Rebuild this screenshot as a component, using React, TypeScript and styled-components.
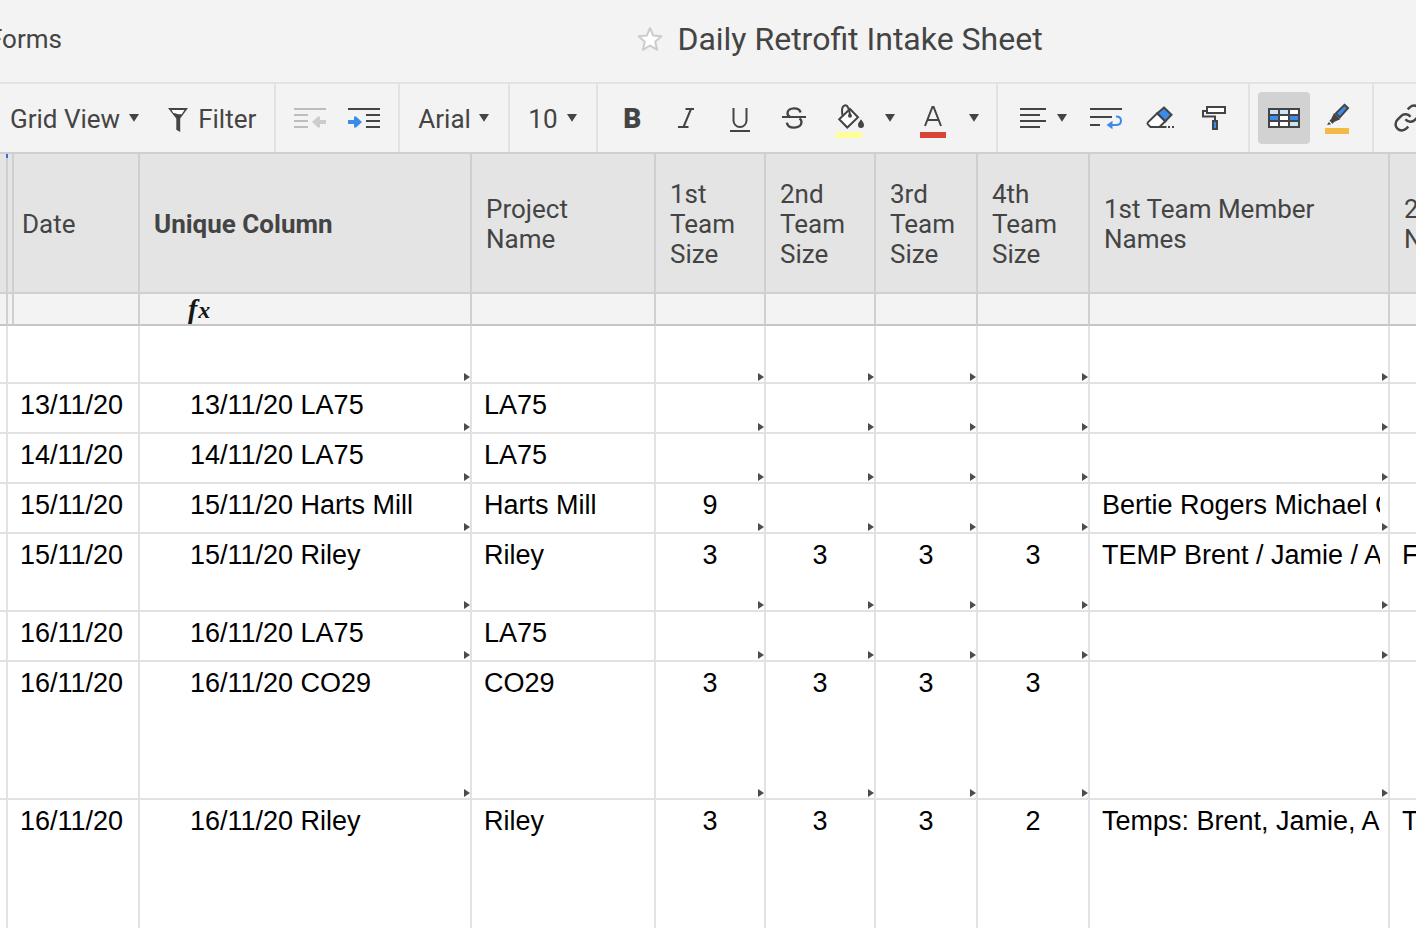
import React from "react";
import styled, { createGlobalStyle } from "styled-components";

const INK = "#444444";
const BLUE = "#3a8bea";
const PALE = "#c9e4f5";

const GlobalStyle = createGlobalStyle`
  *, *::before, *::after { box-sizing: border-box; }
  body {
    margin: 0;
    background: #ffffff;
    color: ${INK};
    font-family: Roboto, "Liberation Sans", sans-serif;
    font-size: 26px;
    line-height: 30px;
  }
  button, select { font: inherit; color: inherit; }
  svg { display: block; flex: none; }
`;

const Page = styled.div`
  display: flex;
  flex-direction: column;
  height: 100vh;
  overflow: hidden;
`;

const TopBar = styled.header`
  display: flex;
  align-items: center;
  height: 84px;
  flex: none;
  padding-bottom: 4px;
  background: #f3f3f3;
  border-bottom: 2px solid #e2e2e2;
`;

const MenuBar = styled.nav`
  width: 264px;
  flex: none;
`;

const MenuLink = styled.a`
  margin-left: -12px;
  color: inherit;
  text-decoration: none;
`;

const TitleArea = styled.div`
  display: flex;
  flex: 1;
  align-items: center;
  justify-content: center;
  gap: 14px;
`;

const StarButton = styled.button`
  padding: 0;
  border: 0;
  background: none;
`;

const Title = styled.h1`
  margin: 0;
  font-size: 32px;
  font-weight: 400;
  line-height: 38px;
  white-space: nowrap;
`;

const Toolbar = styled.div`
  display: flex;
  flex: none;
  height: 70px;
  background: #f3f3f3;
  border-bottom: 2px solid #cfcfcf;
`;

const Group = styled.div<{ $first?: boolean }>`
  display: flex;
  flex: none;
  align-items: center;
  gap: 2px;
  padding: 0 8px 0 ${(p) => (p.$first ? 0 : 8)}px;
  border-right: 2px solid #e2e2e2;
`;

const ToolButton = styled.button<{ $active?: boolean; $strong?: boolean }>`
  display: flex;
  align-items: center;
  justify-content: center;
  width: 52px;
  height: 52px;
  padding: 0;
  border: 0;
  border-radius: 4px;
  background: ${(p) => (p.$active ? "#d2d2d2" : "transparent")};
  ${(p) => p.$strong && "font-size: 28px; font-weight: 900;"}
`;

const WideButton = styled.button<{ $pad: string; $gap: number }>`
  display: flex;
  align-items: center;
  height: 52px;
  gap: ${(p) => p.$gap}px;
  padding: ${(p) => p.$pad};
  border: 0;
  border-radius: 4px;
  background: transparent;
  white-space: nowrap;
`;

const ButtonText = styled.span`
  padding-top: 2px;
`;

const Picker = styled.label<{ $width: number }>`
  display: grid;
  align-items: center;
  width: ${(p) => p.$width}px;
  height: 52px;

  > * { grid-area: 1 / 1; }
  > svg { justify-self: end; margin-right: 10px; pointer-events: none; }
`;

const PickerSelect = styled.select`
  appearance: none;
  width: 100%;
  height: 100%;
  padding: 2px 22px 0 10px;
  border: 0;
  background: transparent;
`;

const SheetArea = styled.main`
  flex: 1;
  min-height: 0;
  overflow: hidden;
`;

const Sheet = styled.table`
  table-layout: fixed;
  width: 1690px;
  border-collapse: separate;
  border-spacing: 0;
`;

const HeadCell = styled.th<{ $strong?: boolean; $pad?: number }>`
  height: 140px;
  padding: 2px 14px 0 ${(p) => p.$pad ?? 14}px;
  background: #e4e4e4;
  border-right: 2px solid #cfcfcf;
  border-bottom: 2px solid #cfcfcf;
  font-weight: ${(p) => (p.$strong ? 700 : 400)};
  text-align: left;
  vertical-align: middle;
`;

const StripCell = styled.td<{ $formula?: boolean; $marker?: boolean }>`
  height: ${(p) => (p.$marker ? 140 : 32)}px;
  padding: 0 0 0 ${(p) => (p.$formula ? 48 : 0)}px;
  background: ${(p) => (p.$marker ? "#e4e4e4" : "#f3f3f3")};
  border-right: 2px solid #cfcfcf;
  border-bottom: 2px solid ${(p) => (p.$marker ? "#cfcfcf" : "#c6c6c6")};
`;

const FreezeMark = styled.div`
  position: relative;
  height: 138px;

  &::after {
    content: "";
    position: absolute;
    top: 0;
    right: -2px;
    width: 2px;
    height: 4px;
    background: #2f6fe0;
  }
`;

const Formula = styled.div`
  height: 30px;
  color: #161616;
  font: italic 700 28px/30px "Liberation Serif", serif;

  small { margin-left: 1px; font-size: 24px; }
`;

const Cell = styled.td<{ $height: number; $indent?: boolean; $center?: boolean }>`
  position: relative;
  height: ${(p) => p.$height}px;
  padding: 6px ${(p) => (p.$center ? 0 : 8)}px 0 ${(p) =>
    p.$center ? 0 : p.$indent ? 50 : 12}px;
  border-right: 2px solid #e2e2e2;
  border-bottom: 2px solid #e2e2e2;
  color: #000000;
  font-family: "Liberation Sans", Arial, sans-serif;
  font-size: 27px;
  text-align: ${(p) => (p.$center ? "center" : "left")};
  vertical-align: top;
`;

const CellText = styled.div`
  overflow: hidden;
  white-space: nowrap;
`;

const CellArrow = styled.span`
  position: absolute;
  right: 0;
  bottom: 1px;
  border: solid transparent;
  border-width: 4px 0 4px 6px;
  border-left-color: #4c4c4c;
`;

const Caret = () => (
  <svg width="12" height="12" viewBox="0 0 12 12" aria-hidden="true">
    <path d="M1 2h10L6 9.800z" fill={INK} />
  </svg>
);

const Icon = ({
  w = 32,
  h = 32,
  children,
}: {
  w?: number;
  h?: number;
  children: React.ReactNode;
}) => (
  <svg
    width={w}
    height={h}
    viewBox={`0 0 ${w} ${h}`}
    fill="none"
    stroke={INK}
    strokeWidth="2"
    aria-hidden="true"
  >
    {children}
  </svg>
);

const gridColours = [
  [PALE, PALE, "#fff"],
  [BLUE, "#fff", BLUE],
  ["#fff", "#fff", PALE],
];

const columns = [126, 332, 184, 110, 110, 102, 112, 300, 300];

const headings = [
  "Project Name",
  "1st Team Size",
  "2nd Team Size",
  "3rd Team Size",
  "4th Team Size",
  "1st Team Member Names",
  "2nd Team Member Names",
];

type Row = { height: number; cells: string[] };

const rows: Row[] = [
  { height: 58, cells: ["", "", "", "", "", "", "", "", ""] },
  { height: 50, cells: ["13/11/20", "13/11/20 LA75", "LA75", "", "", "", "", "", ""] },
  { height: 50, cells: ["14/11/20", "14/11/20 LA75", "LA75", "", "", "", "", "", ""] },
  {
    height: 50,
    cells: ["15/11/20", "15/11/20 Harts Mill", "Harts Mill", "9", "", "", "", "Bertie Rogers Michael C", ""],
  },
  {
    height: 78,
    cells: ["15/11/20", "15/11/20 Riley", "Riley", "3", "3", "3", "3", "TEMP Brent / Jamie / A", "F"],
  },
  { height: 50, cells: ["16/11/20", "16/11/20 LA75", "LA75", "", "", "", "", "", ""] },
  { height: 138, cells: ["16/11/20", "16/11/20 CO29", "CO29", "3", "3", "3", "3", "", ""] },
  {
    height: 168,
    cells: ["16/11/20", "16/11/20 Riley", "Riley", "3", "3", "3", "2", "Temps: Brent, Jamie, A", "T"],
  },
];

export default function App() {
  return (
    <Page>
      <GlobalStyle />
      <TopBar>
        <MenuBar>
          <MenuLink href="#forms">Forms</MenuLink>
        </MenuBar>
        <TitleArea>
          <StarButton aria-label="Favorite">
            <svg width="26" height="26" viewBox="0 0 26 26" aria-hidden="true">
              <path
                d="M13 2l3.2 7.6 8.2.7-6.2 5.4 1.9 8.1L13 19.5l-7.1 4.3 1.9-8.1-6.2-5.4 8.2-.7z"
                fill="#fff"
                stroke="#cccccc"
                strokeWidth="2"
                strokeLinejoin="round"
              />
            </svg>
          </StarButton>
          <Title>Daily Retrofit Intake Sheet</Title>
        </TitleArea>
      </TopBar>

      <Toolbar role="toolbar" aria-label="Formatting">
        <Group $first>
          <WideButton $pad="0 8px 0 10px" $gap={8}>
            <ButtonText>Grid View</ButtonText>
            <Caret />
          </WideButton>
          <WideButton $pad="0 10px 0 18px" $gap={10}>
            <Icon w={20} h={28}>
              <path d="M0 4h20l-7.800 10.500V28l-3.900-2.200V14.500z" fill={INK} stroke="none" />
              <path d="M3.500 6h13l-2.800 4.200c-3 .6-6-.8-8.300-1.200z" fill="#fff" stroke="none" />
            </Icon>
            <ButtonText>Filter</ButtonText>
          </WideButton>
        </Group>

        <Group>
          <ToolButton aria-label="Outdent" disabled>
            <Icon h={20}>
              <path d="M0 1h32M0 7h14M0 13h14M0 19h14" stroke="#bdbdbd" />
              <path d="M18 14l6-5.500h2V12h6v4h-6v3.500h-2z" fill="#cccccc" stroke="none" />
            </Icon>
          </ToolButton>
          <ToolButton aria-label="Indent">
            <Icon h={20}>
              <path d="M0 1h32M18 7h14M18 13h14M18 19h14" />
              <path d="M14 14l-6-5.500H6V12H0v4h6v3.500h2z" fill={BLUE} stroke="none" />
            </Icon>
          </ToolButton>
        </Group>

        <Group>
          <Picker $width={92}>
            <PickerSelect aria-label="Font" defaultValue="Arial">
              <option>Arial</option>
            </PickerSelect>
            <Caret />
          </Picker>
        </Group>

        <Group>
          <Picker $width={70}>
            <PickerSelect aria-label="Font size" defaultValue="10">
              <option>10</option>
            </PickerSelect>
            <Caret />
          </Picker>
        </Group>

        <Group>
          <ToolButton $strong aria-label="Bold">
            <ButtonText>B</ButtonText>
          </ToolButton>
          <ToolButton aria-label="Italic">
            <Icon>
              <path d="M15.500 7H24M8 25h10.500M21 7l-7.500 18" />
            </Icon>
          </ToolButton>
          <ToolButton aria-label="Underline">
            <Icon>
              <path d="M9.500 6v12.500a6.500 6.500 0 0 0 13 0V6M6 29h20" />
            </Icon>
          </ToolButton>
          <ToolButton aria-label="Strikethrough">
            <Icon>
              <path d="M4 15h24" />
              <path d="M22.500 10.500C22 7.800 19.500 6.400 16 6.400c-3.800 0-6.500 1.800-6.500 4.800 0 1.900 1 3 2.700 3.900M21.500 16.500c1.400.9 2 2 2 3.600 0 3.300-3 5.500-7.300 5.500-4 0-7-1.800-7.300-5" strokeWidth="2.400" />
            </Icon>
          </ToolButton>
          <WideButton $pad="0 8px 0 14px" $gap={20} aria-label="Background color">
            <Icon w={28} h={40}>
              <rect y="34" width="26" height="6" fill="#ffff99" stroke="none" />
              <path d="M14 11l8 8.300L11.300 29.500 3.200 21.200z" fill="#fff" />
              <path d="M6.500 17.500c-.8-4-1-9.500 2.300-10.100C12 6.900 13.300 12 14 17" />
              <circle cx="14" cy="17.700" r="2" fill={INK} stroke="none" />
              <path d="M25 21.300c1.500 2 3 3.900 3 5.700a3 3 0 0 1-6 0c0-1.800 1.500-3.700 3-5.700z" fill={INK} stroke="none" />
            </Icon>
            <Caret />
          </WideButton>
          <WideButton $pad="0 8px 0 14px" $gap={22} aria-label="Text color">
            <Icon w={26} h={40}>
              <rect y="34" width="26" height="6" fill="#d94436" stroke="none" />
              <path d="M5 28l7.400-19h1.200L21 28M7.500 22h11" />
            </Icon>
            <Caret />
          </WideButton>
        </Group>

        <Group>
          <WideButton $pad="0 10px 0 14px" $gap={10} aria-label="Align">
            <Icon w={26} h={20}>
              <path d="M0 1h26M0 7h20M0 13h26M0 19h20" />
            </Icon>
            <Caret />
          </WideButton>
          <ToolButton aria-label="Wrap text">
            <Icon>
              <path d="M0 7h32M0 15h22M0 23h10" />
              <path d="M26 14.500c3.300 0 5 1.700 5 4.200s-1.800 4.300-5 4.300h-5" stroke={BLUE} />
              <path d="M16.500 23l6-4.200v8.400z" fill={BLUE} stroke="none" />
            </Icon>
          </ToolButton>
          <ToolButton aria-label="Clear formatting">
            <Icon>
              <path d="M13.300 11.200l8 8L15.500 25H6.500l-2.600-2.600q-.9-1 0-2z" fill="#fff" />
              <path d="M20 5.500l7.500 7.300-6.200 6.400-8-8z" fill={BLUE} />
              <path d="M6 25h16.500M24 25h2M28 25h2" />
            </Icon>
          </ToolButton>
          <ToolButton aria-label="Format painter">
            <Icon>
              <rect x="9" y="5" width="18" height="6" fill="#fff" />
              <path d="M9 9H5v5.500h12V19" />
              <rect x="15" y="19" width="4" height="8" fill={BLUE} />
            </Icon>
          </ToolButton>
        </Group>

        <Group>
          <ToolButton $active aria-label="Conditional formatting">
            <Icon h={20}>
              <rect width="32" height="20" fill={INK} stroke="none" />
              {gridColours.map((line, r) =>
                line.map((fill, c) => (
                  <rect
                    key={`${r}-${c}`}
                    x={2 + c * 10}
                    y={2 + r * 6}
                    width="8"
                    height="4"
                    fill={fill}
                    stroke="none"
                  />
                ))
              )}
            </Icon>
          </ToolButton>
          <ToolButton aria-label="Highlight changes">
            <Icon>
              <rect x="3" y="26" width="24" height="6" fill="#f3bb45" stroke="none" />
              <path d="M22.500 2.800l3.500 3.200-8.200 9.300-4-3.900z" fill={BLUE} />
              <path d="M12 11l6.300 6.200-5.800 2.600-2 2-3-3 1.800-2z" fill={INK} stroke="none" />
              <path d="M6.800 20l2.400 2.300-4.200.8z" fill={INK} stroke="none" />
            </Icon>
          </ToolButton>
        </Group>

        <Group>
          <ToolButton aria-label="Insert link">
            <svg
              width="30"
              height="30"
              viewBox="0 0 24 24"
              fill="none"
              stroke={INK}
              strokeWidth="2"
              strokeLinecap="butt"
              aria-hidden="true"
            >
              <path d="M10 13a5 5 0 0 0 7.540.54l3-3a5 5 0 0 0-7.070-7.070l-1.720 1.710" />
              <path d="M14 11a5 5 0 0 0-7.540-.54l-3 3a5 5 0 0 0 7.070 7.070l1.710-1.710" />
            </svg>
          </ToolButton>
        </Group>
      </Toolbar>

      <SheetArea>
        <Sheet>
          <colgroup>
            <col width={8} />
            <col width={6} />
            {columns.map((width, i) => (
              <col key={i} width={width} />
            ))}
          </colgroup>
          <thead>
            <tr>
              <StripCell $marker>
                <FreezeMark />
              </StripCell>
              <StripCell $marker />
              <HeadCell $pad={8}>Date</HeadCell>
              <HeadCell $strong>Unique Column</HeadCell>
              {headings.map((text) => (
                <HeadCell key={text}>{text}</HeadCell>
              ))}
            </tr>
            <tr>
              <StripCell />
              <StripCell />
              {columns.map((_, i) => (
                <StripCell key={i} $formula={i === 1}>
                  {i === 1 && (
                    <Formula>
                      f<small>x</small>
                    </Formula>
                  )}
                </StripCell>
              ))}
            </tr>
          </thead>
          <tbody>
            {rows.map((row, r) => (
              <tr key={r}>
                <Cell $height={row.height} $center />
                {row.cells.map((text, c) => (
                  <Cell
                    key={c}
                    colSpan={c === 0 ? 2 : 1}
                    $height={row.height}
                    $indent={c === 1}
                    $center={c > 2 && c < 7}
                  >
                    <CellText>{text}</CellText>
                    {c !== 0 && c !== 2 && <CellArrow />}
                  </Cell>
                ))}
              </tr>
            ))}
          </tbody>
        </Sheet>
      </SheetArea>
    </Page>
  );
}
